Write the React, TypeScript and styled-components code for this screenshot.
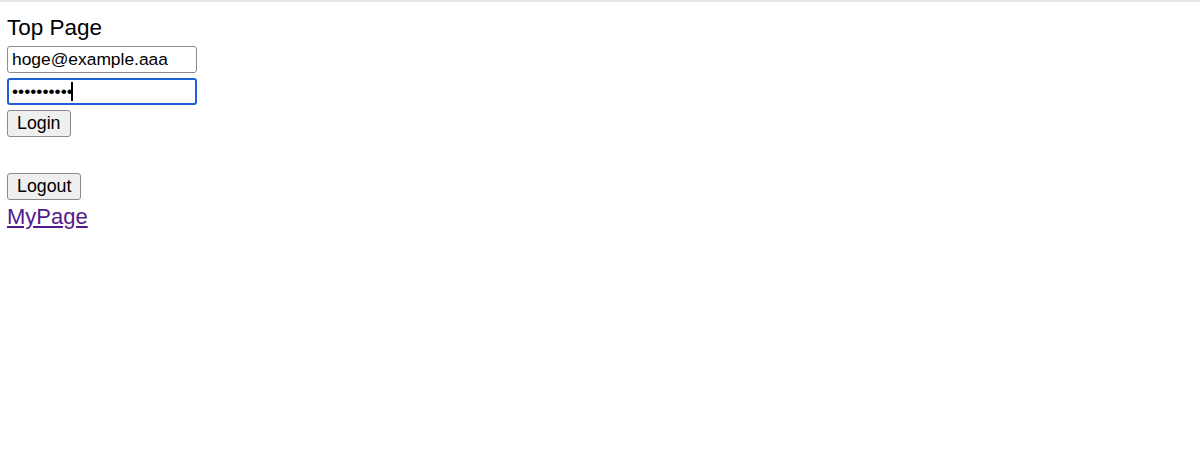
import React from "react";
import styled, { createGlobalStyle } from "styled-components";

const GlobalStyle = createGlobalStyle`
  html, body {
    margin: 0;
    padding: 0;
    background: #ffffff;
  }
  body {
    font-family: "Liberation Sans", Arial, sans-serif;
    color: #000000;
  }
`;

const TopRule = styled.div`
  height: 2px;
  background: #e6e6e6;
`;

const Page = styled.main`
  display: flex;
  flex-direction: column;
  align-items: flex-start;
  padding: 14px 0 0 7px;
`;

const Title = styled.div`
  font-size: 22.5px;
  line-height: 24px;
  margin-bottom: 6px;
`;

const Form = styled.form`
  display: flex;
  flex-direction: column;
  align-items: flex-start;
  gap: 5px;
`;

const FieldWrap = styled.div`
  position: relative;
  display: flex;
`;

const TextInput = styled.input<{ $focused?: boolean }>`
  box-sizing: border-box;
  width: 190px;
  height: 27px;
  margin: 0;
  font-family: "Liberation Sans", Arial, sans-serif;
  font-size: 17.4px;
  color: #000;
  background: #fff;
  border: ${(p) => (p.$focused ? "2px solid #1f5fd1" : "1px solid #8c8c8c")};
  border-radius: 3px;
  outline: none;
  caret-color: transparent;
  padding: 0 ${(p) => (p.$focused ? "3px" : "4px")};
`;

const Caret = styled.span`
  position: absolute;
  left: 64px;
  top: 4px;
  width: 1.5px;
  height: 19px;
  background: #000;
`;

const Button = styled.button`
  box-sizing: border-box;
  height: 27px;
  margin: 0;
  padding: 0 9px;
  font-family: "Liberation Sans", Arial, sans-serif;
  font-size: 17.8px;
  color: #000;
  background: #efefef;
  border: 1px solid #8a8a8a;
  border-radius: 3px;
  cursor: default;
`;

const LogoutButton = styled(Button)`
  margin-top: 36px;
`;

const Link = styled.a`
  margin-top: 5px;
  font-size: 22px;
  line-height: 24px;
  color: #551a8b;
  text-decoration: underline;
`;

export default function App() {
  return (
    <>
      <GlobalStyle />
      <TopRule />
      <Page>
        <Title>Top Page</Title>
        <Form onSubmit={(e) => e.preventDefault()}>
          <FieldWrap>
            <TextInput type="text" defaultValue="hoge@example.aaa" />
          </FieldWrap>
          <FieldWrap>
            <TextInput type="password" defaultValue="aaaaaaaaaa" $focused />
            <Caret />
          </FieldWrap>
          <Button type="submit">Login</Button>
        </Form>
        <LogoutButton type="button">Logout</LogoutButton>
        <Link href="#mypage">MyPage</Link>
      </Page>
    </>
  );
}
